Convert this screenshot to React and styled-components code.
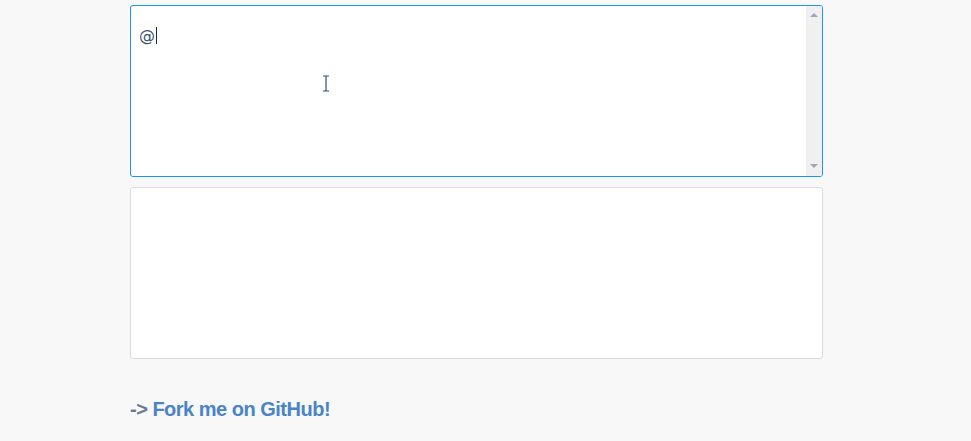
import React from "react";
import styled, { createGlobalStyle } from "styled-components";

const GlobalStyle = createGlobalStyle`
  html, body {
    margin: 0;
    padding: 0;
    background: #f8f8f8;
    font-family: "Liberation Sans", Arial, sans-serif;
  }
`;

const Page = styled.div`
  width: 693px;
  margin-left: 130px;
  padding-top: 5px;
  display: flex;
  flex-direction: column;
  gap: 10px;
`;

const Box = styled.div`
  position: relative;
  height: 170px;
  display: flex;
  background: #fff;
  border: 1px solid ${(p) => (p.$focused ? "#1e90ff" : "#dcdcdc")};
  border-radius: 3px;
  overflow: hidden;
`;

const Editor = styled.div`
  flex: 1;
  padding: 21px 8px;
  font-family: "DejaVu Sans", sans-serif;
  font-size: 16px;
  color: #3b5278;
  line-height: 18px;
`;

const Caret = styled.span`
  display: inline-block;
  width: 1px;
  height: 17px;
  background: #1c2a44;
  vertical-align: -3px;
  margin-left: 1px;
`;

const Scrollbar = styled.div`
  width: 16px;
  background: #f0f0f0;
  display: flex;
  flex-direction: column;
  justify-content: space-between;
  align-items: center;
  padding: 7px 0 8px;
`;

const Arrow = styled.div`
  width: 0;
  height: 0;
  border-left: 4px solid transparent;
  border-right: 4px solid transparent;
  ${(p) =>
    p.$down
      ? "border-top: 4px solid #a7a1bb;"
      : "border-bottom: 4px solid #a7a1bb;"}
`;

const Cursor = styled.svg`
  position: absolute;
  left: 191px;
  top: 69px;
`;

const Footer = styled.div`
  padding-top: 29px;
  font-family: "Liberation Sans", Arial, sans-serif;
  font-weight: bold;
  font-size: 20px;
  letter-spacing: -0.5px;
`;

const Arrowtext = styled.span`
  color: #6a7898;
`;

const Link = styled.a`
  color: #4a84c6;
  text-decoration: none;
`;

export default function App() {
  return (
    <>
      <GlobalStyle />
      <Page>
        <Box $focused>
          <Editor>
            @<Caret />
          </Editor>
          <Scrollbar>
            <Arrow />
            <Arrow $down />
          </Scrollbar>
          <Cursor width="8" height="17" viewBox="0 0 8 17">
            <path d="M1 1h6M4 1v15M1 16h6" stroke="#2d4f7f" strokeWidth="1.2" fill="none" />
          </Cursor>
        </Box>
        <Box />
        <Footer>
          <Arrowtext>-&gt; </Arrowtext>
          <Link href="#">Fork me on GitHub!</Link>
        </Footer>
      </Page>
    </>
  );
}
